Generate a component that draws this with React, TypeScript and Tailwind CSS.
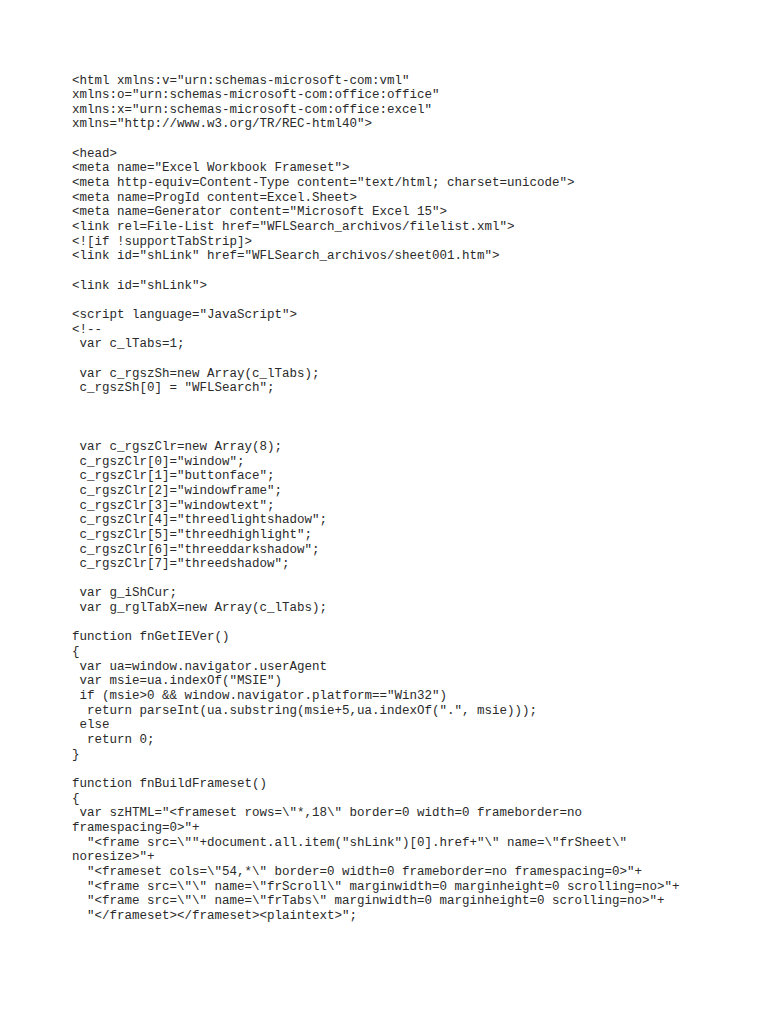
import React from "react";

const code = `<html xmlns:v="urn:schemas-microsoft-com:vml"
xmlns:o="urn:schemas-microsoft-com:office:office"
xmlns:x="urn:schemas-microsoft-com:office:excel"
xmlns="http://www.w3.org/TR/REC-html40">

<head>
<meta name="Excel Workbook Frameset">
<meta http-equiv=Content-Type content="text/html; charset=unicode">
<meta name=ProgId content=Excel.Sheet>
<meta name=Generator content="Microsoft Excel 15">
<link rel=File-List href="WFLSearch_archivos/filelist.xml">
<![if !supportTabStrip]>
<link id="shLink" href="WFLSearch_archivos/sheet001.htm">

<link id="shLink">

<script language="JavaScript">
<!--
 var c_lTabs=1;

 var c_rgszSh=new Array(c_lTabs);
 c_rgszSh[0] = "WFLSearch";



 var c_rgszClr=new Array(8);
 c_rgszClr[0]="window";
 c_rgszClr[1]="buttonface";
 c_rgszClr[2]="windowframe";
 c_rgszClr[3]="windowtext";
 c_rgszClr[4]="threedlightshadow";
 c_rgszClr[5]="threedhighlight";
 c_rgszClr[6]="threeddarkshadow";
 c_rgszClr[7]="threedshadow";

 var g_iShCur;
 var g_rglTabX=new Array(c_lTabs);

function fnGetIEVer()
{
 var ua=window.navigator.userAgent
 var msie=ua.indexOf("MSIE")
 if (msie>0 && window.navigator.platform=="Win32")
  return parseInt(ua.substring(msie+5,ua.indexOf(".", msie)));
 else
  return 0;
}

function fnBuildFrameset()
{
 var szHTML="<frameset rows=\\"*,18\\" border=0 width=0 frameborder=no
framespacing=0>"+
  "<frame src=\\""+document.all.item("shLink")[0].href+"\\" name=\\"frSheet\\"
noresize>"+
  "<frameset cols=\\"54,*\\" border=0 width=0 frameborder=no framespacing=0>"+
  "<frame src=\\"\\" name=\\"frScroll\\" marginwidth=0 marginheight=0 scrolling=no>"+
  "<frame src=\\"\\" name=\\"frTabs\\" marginwidth=0 marginheight=0 scrolling=no>"+
  "</frameset></frameset><plaintext>";`;

export default function App() {
  return (
    <div className="w-[768px] h-[1024px] bg-white overflow-hidden">
      <pre className="pl-[72px] pt-[73.5px] m-0 whitespace-pre text-[12.5px] leading-[14.65px] text-[#2a2a2a] font-['Liberation_Mono',monospace]">
        {code}
      </pre>
    </div>
  );
}
